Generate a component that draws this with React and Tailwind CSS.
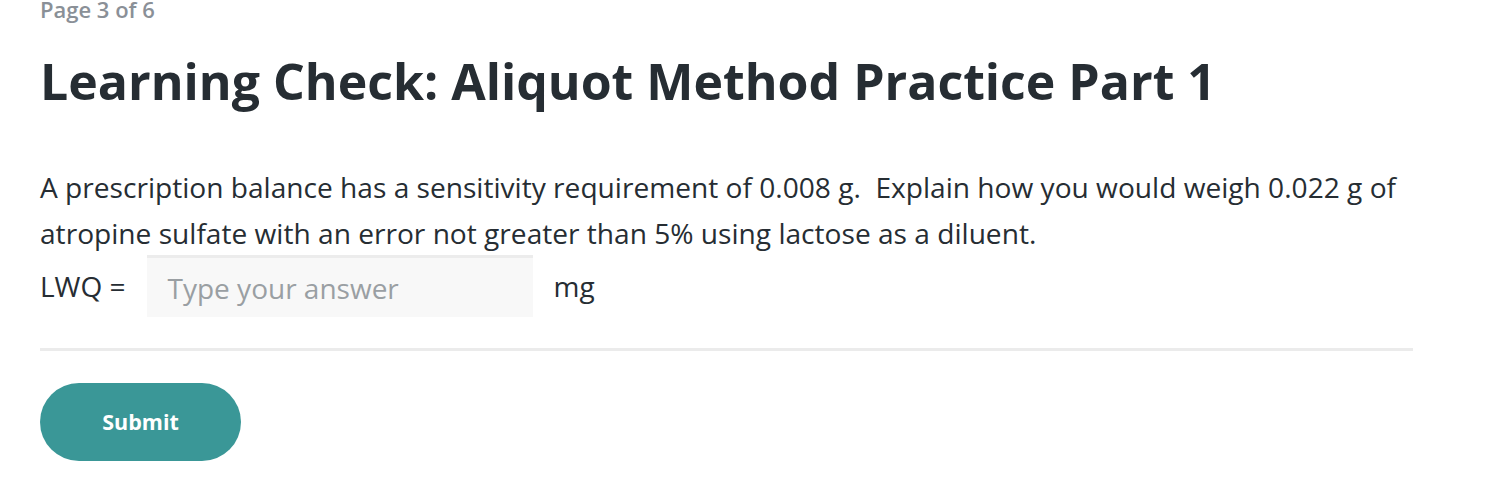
export default function App() {
  return (
    <div className="bg-white w-[1512px] h-[491px] overflow-hidden" style={{ fontFamily: '"Open Sans", sans-serif' }}>
      <div className="pl-[40px] w-[1413px]">
        <div className="text-[22px] font-semibold text-[#8a9097] leading-[24px] -mt-[3px]">Page 3 of 6</div>
        <h1 className="mt-[26px] text-[50px] font-bold text-[#262d33] leading-[68px]">Learning Check: Aliquot Method Practice Part 1</h1>
        <p className="mt-[49px] text-[28.12px] text-[#262d33] leading-[46px]">
          A prescription balance has a sensitivity requirement of 0.008 g.&nbsp; Explain how you would weigh 0.022 g of atropine sulfate with an error not greater than 5% using lactose as a diluent.
        </p>
        <div className="flex items-center h-[62px] -mt-[1px]">
          <span className="text-[28px] text-[#262d33]">LWQ =</span>
          <div className="ml-[21px] w-[386px] h-[62px] bg-[#f8f8f8] border-t-[3px] border-[#ececec] flex items-center pl-[21px]">
            <span className="text-[28px] text-[#9a9fa3]">Type your answer</span>
          </div>
          <span className="ml-[21px] text-[28px] text-[#262d33]">mg</span>
        </div>
        <div className="mt-[31px] h-[3px] bg-[#ebebeb]"></div>
        <button className="mt-[32px] w-[201px] h-[78px] rounded-full bg-[#3a9797] text-white text-[21.5px] font-bold">Submit</button>
      </div>
    </div>
  );
}
